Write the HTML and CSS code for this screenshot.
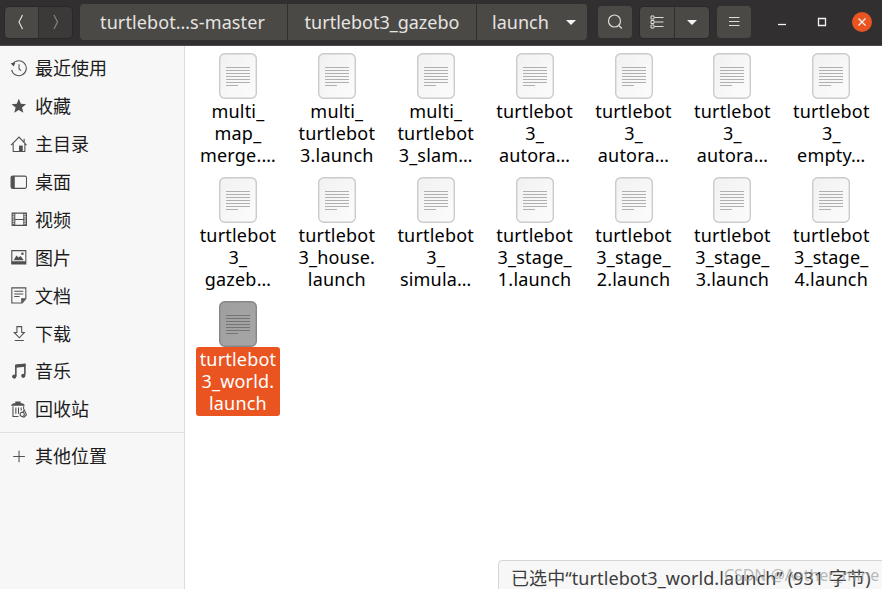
FILE: index.html
```html
<!DOCTYPE html>
<html lang="zh-CN">
<head>
<meta charset="utf-8">
<title>launch</title>
<link rel="stylesheet" href="styles.css">
</head>
<body>
<svg class="defs" width="0" height="0">
  <defs>
    <linearGradient id="paper" x1="0" y1="0" x2="1" y2="1"><stop offset="0" stop-color="#f1f1f1"/><stop offset="1" stop-color="#fcfcfc"/></linearGradient>
    <symbol id="doc" viewBox="0 0 40 48">
      <rect class="sheet" x="1.7" y="1.7" width="36.600" height="44.600" rx="5"/>
      <path class="lines" d="M8 15.500h24M8 18.500h24M8 21.500h24M8 24.500h24M8 27.500h24M8 30.500h24M8 33.500h12"/>
    </symbol>
  </defs>
</svg>
<div class="window">
  <header class="bar">
    <div class="group nav">
      <button class="btn"><svg width="16" height="18" viewBox="0 0 16 18"><path d="M8.500 2 5 9l3.500 7"/></svg></button>
      <button class="btn off"><svg width="16" height="18" viewBox="0 0 16 18"><path d="M6 2l3.500 7L6 16"/></svg></button>
    </div>
    <nav class="path">
      <span class="crumb c1"><span>turtlebot…s-master</span></span>
      <span class="crumb c2"><span>turtlebot3_gazebo</span></span>
      <span class="crumb c3"><span>launch</span><i class="caret"></i></span>
    </nav>
    <button class="btn solo search"><svg width="18" height="18" viewBox="0 0 18 18"><circle cx="8.500" cy="8" r="6"/><path d="m12.800 12.500 3 3"/></svg></button>
    <div class="group view">
      <button class="btn"><svg width="16" height="16" viewBox="0 0 16 16"><path d="M5.500 3.500h9M5.500 8h9M5.500 12.500h9"/><path class="fine" d="M2 2h3v3H2zM2 6.500h3v3H2zM2 11h3v3H2z"/></svg></button>
      <button class="btn"><i class="caret"></i></button>
    </div>
    <button class="btn solo menu"><svg width="16" height="16" viewBox="0 0 16 16"><path d="M3 3.500h10.500M3 7.500h10.500M3 11.500h10.500"/></svg></button>
    <div class="controls">
      <svg width="16" height="16" viewBox="0 0 16 16"><path d="M4 10.500h8"/></svg>
      <svg width="16" height="16" viewBox="0 0 16 16"><path d="M4.500 4.500h7v7h-7z"/></svg>
      <span class="close"><svg width="20" height="20" viewBox="0 0 20 20"><path d="m6.500 6.500 7 7M13.500 6.500l-7 7"/></svg></span>
    </div>
  </header>
  <div class="content">
    <aside class="side">
      <ul>
        <li><svg viewBox="0 0 16 16"><path d="M2.300 4.200a7 7 0 1 1-.8 5M8.500 4v4.500l2 1.500"/><path class="solid" d="M.5 3 5 2.500 3.500 6z"/></svg><span>最近使用</span></li>
        <li><svg viewBox="0 0 16 16"><path class="fill" d="m8.300.8 1.900 4.700 5 .3-3.900 3.200 1.300 4.900-4.300-2.700L4 13.900 5.300 9 1.400 5.800l5-.3z"/></svg><span>收藏</span></li>
        <li><svg viewBox="0 0 16 16"><path d="M1 8.500 8.500 1l7 7.500M3 7v7.500h11V7M13.300 2.500V6"/><path class="fill" d="M8.500 9H12v5.500H8.500z"/></svg><span>主目录</span></li>
        <li><svg viewBox="0 0 16 16"><rect x="1" y="2" width="14.500" height="11.500" rx="1.500"/><path class="fill" d="M1 2h3.500v11.500H1z"/></svg><span>桌面</span></li>
        <li><svg viewBox="0 0 16 16"><path d="M2 2h13.500v11.500H2zM4.500 2v11.500M13 2v11.500M4.500 8H13"/><path class="dash" d="M3 2v12M14.500 2v12"/></svg><span>视频</span></li>
        <li><svg viewBox="0 0 16 16"><path d="M1.700 1.500h13.200v12.500H1.700z"/><path class="fill" d="M1.500 11.500H15V14H1.500zM3.500 10.500 6 6l2 2 2-1.500 3 4z"/><circle class="fill" cx="11.700" cy="4.500" r="1.200"/></svg><span>图片</span></li>
        <li><svg viewBox="0 0 16 16"><path d="M1.700.8h13.200v10L11.500 15H1.700zM4 4h8.500M4 6.500h8.500M4 9h5"/><path class="fill" d="M10.500 15v-4.500H15z"/></svg><span>文档</span></li>
        <li><svg viewBox="0 0 16 16"><path d="M6.500 1.500h4.500V7h2.500l-4.700 5L4 7h2.500zM4.500 14.500H13"/></svg><span>下载</span></li>
        <li><svg viewBox="0 0 16 16"><path class="thick" d="M5.500 12.500V2.500l8.500-1V11"/><path class="fill" d="m5 1.500 9.500-1V3.500L5 4.500z"/><circle class="fill" cx="4" cy="12.800" r="2"/><circle class="fill" cx="12.500" cy="12" r="2"/></svg><span>音乐</span></li>
        <li><svg viewBox="0 0 16 16"><path d="M2.800 5v9.500H8M5.500 6v6M8 6v6M10.500 6v3M12.800 5v3"/><path class="fill" d="M1 4.500C1.500 2.500 3 2 5 2V.5h5V2c2 0 3.500.5 4 2.500z"/><circle cx="11.500" cy="12.500" r="2"/><path d="m12 10.500 1.500-2 2 4.500-2 2h-2"/></svg><span>回收站</span></li>
      </ul>
      <div class="other"><svg viewBox="0 0 16 16"><path d="M3 8h11M8.500 2.500v11"/></svg><span>其他位置</span></div>
    </aside>
    <main class="files">
      <div class="file"><svg><use href="#doc"/></svg><p>multi_<br>map_<br>merge.…</p></div>
      <div class="file"><svg><use href="#doc"/></svg><p>multi_<br>turtlebot<br>3.launch</p></div>
      <div class="file"><svg><use href="#doc"/></svg><p>multi_<br>turtlebot<br>3_slam…</p></div>
      <div class="file"><svg><use href="#doc"/></svg><p>turtlebot<br>3_<br>autora…</p></div>
      <div class="file"><svg><use href="#doc"/></svg><p>turtlebot<br>3_<br>autora…</p></div>
      <div class="file"><svg><use href="#doc"/></svg><p>turtlebot<br>3_<br>autora…</p></div>
      <div class="file"><svg><use href="#doc"/></svg><p>turtlebot<br>3_<br>empty…</p></div>
      <div class="file"><svg><use href="#doc"/></svg><p>turtlebot<br>3_<br>gazeb…</p></div>
      <div class="file"><svg><use href="#doc"/></svg><p>turtlebot<br>3_house.<br>launch</p></div>
      <div class="file"><svg><use href="#doc"/></svg><p>turtlebot<br>3_<br>simula…</p></div>
      <div class="file"><svg><use href="#doc"/></svg><p>turtlebot<br>3_stage_<br>1.launch</p></div>
      <div class="file"><svg><use href="#doc"/></svg><p>turtlebot<br>3_stage_<br>2.launch</p></div>
      <div class="file"><svg><use href="#doc"/></svg><p>turtlebot<br>3_stage_<br>3.launch</p></div>
      <div class="file"><svg><use href="#doc"/></svg><p>turtlebot<br>3_stage_<br>4.launch</p></div>
      <div class="file selected"><svg><use href="#doc"/></svg><p>turtlebot<br>3_world.<br>launch</p></div>
    </main>
  </div>
  <div class="status">已选中“<span>turtlebot3_world.launch</span>” (931 字节)</div>
  <div class="mark">CSDN @Aether_mine</div>
</div>
</body>
</html>
```

FILE: styles.css
```css
* { box-sizing: border-box; }
body { margin: 0; font: 18px/22px "Noto Sans", "Noto Sans CJK SC", sans-serif; }
svg { fill: none; stroke: currentColor; stroke-width: 1.2; flex: none; }
.defs { position: absolute; }
.window { position: relative; width: 882px; height: 589px; overflow: hidden; background: #fff; }

.bar { display: flex; align-items: center; height: 46px; padding: 0 0 1px 4px; background: #322f30; border-bottom: 1px solid #4d4a4a; color: #e0dfdd; }
.group { display: flex; height: 33px; border: 1px solid #2a2828; border-radius: 5px; overflow: hidden; }
.btn { display: flex; align-items: center; justify-content: center; flex: 1; padding: 0; border: 0; background: #4a4946; color: #dddcda; }
.btn + .btn { border-left: 1px solid #302e2e; }
.btn.off { background: #3b3a39; color: #858482; }
.btn.solo { flex: none; width: 34px; height: 32px; border-radius: 4px; }
.nav { width: 69px; }
.path { display: flex; height: 36px; margin-left: 7px; border-radius: 4px; overflow: hidden; background: #4a4946; }
.crumb { display: flex; align-items: center; justify-content: center; color: #e6e4e1; white-space: nowrap; }
.crumb + .crumb { border-left: 1px solid #302e2e; }
.c1 { width: 207px; letter-spacing: .1px; padding-right: 2px; }
.c2 { width: 189px; }
.c3 { width: 111px; gap: 17px; padding-left: 4px; }
.caret { border: 5px solid transparent; border-top-color: #f4f4f4; border-bottom: 0; }
.search { margin-left: 11px; }
.view { width: 71px; margin-left: 7px; }
.menu { margin-left: 7px; }
.fine { stroke-width: 1; }
.controls { display: flex; align-items: center; margin-left: 23px; gap: 24px; color: #f2f2f2; }
.controls svg { stroke-width: 1.3; }
.close { display: flex; margin-left: -2px; border-radius: 50%; background: #e95420; }

.content { display: flex; height: 543px; }
.side { width: 185px; background: #f7f7f7; border-right: 1px solid #ddd; color: #1c1c1c; }
.side ul { margin: 0; padding: 3.4px 0 3.6px; list-style: none; }
.side li, .other { display: flex; align-items: center; gap: 8px; height: 37.9px; padding-left: 10px; }
.side svg { width: 17px; height: 17px; color: #505050; stroke-width: 1; }
.other { height: 48px; border-top: 1px solid #e0e0e0; }
.fill { fill: currentColor; stroke: none; }
.solid { fill: currentColor; stroke: none; }
.dash { stroke-dasharray: 1 1; stroke-width: 2; }
.thick { stroke-width: 1.5; }

.files { display: grid; grid-template-columns: repeat(7, 98.9px); grid-auto-rows: 124px; flex: 1; padding: 6px 0 0 3.5px; align-content: start; }
.file { display: flex; flex-direction: column; align-items: center; }
.file svg { width: 40px; height: 48px; margin-bottom: -1px; color: #aaa; }
.file p { margin: 0; padding: 1px 3px; width: 84px; height: 69px; border-radius: 3px; text-align: center; letter-spacing: .2px; white-space: nowrap; color: #000; }
.sheet { fill: url(#paper); stroke: #cbcbcb; stroke-width: 1.4; }
.lines { stroke: #b0b0b0; stroke-width: 1.2; }
.selected p { background: #e95420; color: #fff; }
.selected svg { filter: brightness(.66); }
.selected .sheet { stroke: none; }

.status { position: absolute; left: 498px; top: 560px; width: 400px; height: 40px; padding: 6px 0 0 12px; border: 1px solid #d5d5d5; border-radius: 4px 0 0 0; background: #f7f7f7; color: #3c3c3c; letter-spacing: .08px; white-space: nowrap; }
.mark { position: absolute; left: 724px; top: 564px; font-size: 16px; letter-spacing: -.1px; color: rgba(150, 150, 150, .65); white-space: nowrap; }
```
